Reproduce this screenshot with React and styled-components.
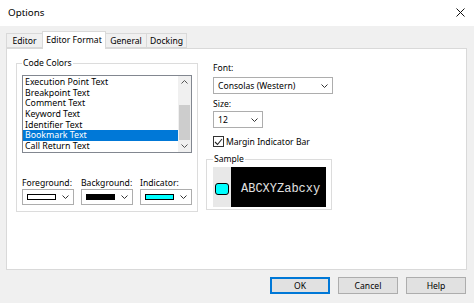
import React from 'react';
import styled, { createGlobalStyle } from 'styled-components';

const Global = createGlobalStyle`
  html, body { margin: 0; padding: 0; }
  body {
    width: 474px; height: 303px; overflow: hidden;
    background: #fff;
    font-family: "Noto Sans", "Open Sans", sans-serif;
    font-size: 8.6px; color: #000;
  }
  * { box-sizing: border-box; }
`;

const Window = styled.div`
  width: 474px; height: 303px;
  display: flex; flex-direction: column;
  background: #f0f0f0;
`;

const TitleBar = styled.div`
  height: 26px; flex-shrink: 0;
  background: #fff;
  display: flex; align-items: center; justify-content: space-between;
  padding: 0 9px 1px 8px;
`;

const Title = styled.span`
  font-size: 9.8px; color: #000;
`;

const Body = styled.div`
  padding: 5px 0 0 6px;
  display: flex; flex-direction: column;
`;

const TabStrip = styled.div`
  display: flex; align-items: flex-end;
  height: 17px;
  position: relative; z-index: 1;
`;

const Tab = styled.div`
  width: ${p => p.$w}px;
  height: ${p => (p.$active ? 18 : 15)}px;
  margin-bottom: ${p => (p.$active ? -1 : 0)}px;
  display: flex; align-items: center; justify-content: center;
  padding-bottom: ${p => (p.$active ? 2 : 0)}px;
  background: ${p => (p.$active ? '#fff' : '#f0f0f0')};
  border: 1px solid #d9d9d9;
  border-bottom: ${p => (p.$active ? 'none' : '1px solid #d9d9d9')};
  border-left-width: ${p => (p.$first || p.$active ? 1 : 0)}px;
  border-right-width: ${p => (p.$beforeActive ? 0 : 1)}px;
  white-space: nowrap;
`;

const Panel = styled.div`
  width: 461px; height: 222px;
  background: #fff;
  border: 1px solid #d9d9d9;
  display: flex; align-items: flex-start;
  padding: 8px 0 0 9px;
`;

const Group = styled.fieldset`
  margin: 0; min-width: 0;
  border: 1px solid #dcdcdc;
  width: ${p => p.$w}px;
  height: ${p => p.$h}px;
  padding: 0 5px 0 ${p => p.$pl}px;
`;

const Legend = styled.legend`
  padding: 0 1px;
  line-height: 12px;
`;

const ListBox = styled.div`
  margin-top: 6px;
  width: 170px; height: 78px;
  border: 1px solid #828790;
  display: flex;
  background: #fff;
`;

const Items = styled.div`
  flex: 1; padding: 1px 0 0 0;
  overflow: hidden;
`;

const Item = styled.div`
  height: 10.67px; line-height: 10.67px;
  padding-left: 2px;
  white-space: nowrap;
  font-size: 8.8px;
  background: ${p => (p.$sel ? '#0078d7' : 'transparent')};
  color: ${p => (p.$sel ? '#fff' : '#000')};
`;

const ScrollBar = styled.div`
  width: 13px;
  background: #f0f0f0;
  display: flex; flex-direction: column;
  align-items: center;
`;

const ScrollBtn = styled.div`
  height: 13px; width: 100%;
  display: flex; align-items: center; justify-content: center;
`;

const Track = styled.div`
  flex: 1; width: 100%;
  display: flex; flex-direction: column;
  padding: 0 1px;
`;

const Thumb = styled.div`
  margin-top: 16px;
  height: 35px;
  background: #cdcdcd;
`;

const ColorRow = styled.div`
  margin-top: 24px;
  display: flex; gap: 7px;
`;

const ColorField = styled.div`
  display: flex; flex-direction: column;
`;

const Label = styled.div`
  line-height: 12px;
  white-space: nowrap;
`;

const Combo = styled.div`
  width: ${p => p.$w}px; height: ${p => p.$h || 16}px;
  margin-top: ${p => p.$mt || 0}px;
  border: 1px solid #adadad;
  background: #fff;
  display: flex; align-items: center; justify-content: space-between;
  padding: 0 4px 0 ${p => p.$pl || 4}px;
  white-space: nowrap;
`;

const Swatch = styled.div`
  width: 29px; height: 6px;
  border: 1px solid #000;
  background: ${p => p.$c};
`;

const RightCol = styled.div`
  margin: 5px 0 0 8px;
  width: 127px;
  display: flex; flex-direction: column;
`;

const Indent = styled.div`
  margin-left: 7px;
  margin-top: ${p => p.$mt || 0}px;
  display: flex; flex-direction: column;
`;

const CheckRow = styled.label`
  margin: 7px 0 0 7px;
  height: 13px;
  display: flex; align-items: center; gap: 2px;
`;

const CheckBox = styled.span`
  width: 11px; height: 11px;
  border: 1px solid #333;
  background: #fff;
  display: flex; align-items: center; justify-content: center;
`;

const SampleGroup = styled(Group)`
  margin-top: 5px;
`;

const SampleBox = styled.div`
  margin-top: 2px;
  height: 40px; width: 113px;
  display: flex;
`;

const Margin = styled.div`
  width: 18px; background: #e8e8e8;
  display: flex; align-items: center; padding-left: 2px;
  padding-top: 3px;
`;

const Indicator = styled.div`
  width: 14px; height: 12px;
  border: 1px solid #000;
  border-radius: 3px;
  background: #00ffff;
`;

const Code = styled.div`
  flex: 1; background: #000; color: #e0e0e0;
  font-family: "Liberation Mono", "DejaVu Sans Mono", monospace;
  font-size: 12px;
  display: flex; align-items: center;
  padding: 3px 0 0 10px;
  overflow: hidden; white-space: nowrap;
`;

const Footer = styled.div`
  display: flex; justify-content: flex-end; gap: 8px;
  padding: 7px 8px 0 0;
`;

const Button = styled.div`
  width: 60px; height: 17px;
  border: 1px solid ${p => (p.$def ? '#0078d7' : '#adadad')};
  box-shadow: ${p => (p.$def ? 'inset 0 0 0 1px #0078d7' : 'none')};
  background: #e1e1e1;
  display: flex; align-items: center; justify-content: center;
`;

const Chevron = () => (
  <svg width="7" height="4" viewBox="0 0 7 4">
    <path d="M0.5 0.5 L3.5 3.5 L6.5 0.5" fill="none" stroke="#333" strokeWidth="1" />
  </svg>
);

const items = [
  'Execution Point Text',
  'Breakpoint Text',
  'Comment Text',
  'Keyword Text',
  'Identifier Text',
  'Bookmark Text',
  'Call Return Text',
];

export default function App() {
  return (
    <>
      <Global />
      <Window>
        <TitleBar>
          <Title>Options</Title>
          <svg width="9" height="9" viewBox="0 0 9 9">
            <path d="M0.5 0.5 L8.5 8.5 M8.5 0.5 L0.5 8.5" stroke="#111" strokeWidth="1" />
          </svg>
        </TitleBar>
        <Body>
          <TabStrip>
            <Tab $first $beforeActive $w={36}>Editor</Tab>
            <Tab $active $w={64}>Editor Format</Tab>
            <Tab $w={41}>General</Tab>
            <Tab $w={40}>Docking</Tab>
          </TabStrip>
          <Panel>
            <Group $w={182} $h={155} $pl={5}>
              <Legend>Code Colors</Legend>
              <ListBox>
                <Items>
                  {items.map(t => (
                    <Item key={t} $sel={t === 'Bookmark Text'}>{t}</Item>
                  ))}
                </Items>
                <ScrollBar>
                  <ScrollBtn>
                    <svg width="7" height="4" viewBox="0 0 7 4">
                      <path d="M0.5 3.5 L3.5 0.5 L6.5 3.5" fill="none" stroke="#555" strokeWidth="1" />
                    </svg>
                  </ScrollBtn>
                  <Track><Thumb /></Track>
                  <ScrollBtn>
                    <svg width="7" height="4" viewBox="0 0 7 4">
                      <path d="M0.5 0.5 L3.5 3.5 L6.5 0.5" fill="none" stroke="#555" strokeWidth="1" />
                    </svg>
                  </ScrollBtn>
                </ScrollBar>
              </ListBox>
              <ColorRow>
                <ColorField>
                  <Label>Foreground:</Label>
                  <Combo $w={52}><Swatch $c="#fff" /><Chevron /></Combo>
                </ColorField>
                <ColorField>
                  <Label>Background:</Label>
                  <Combo $w={52}><Swatch $c="#000" /><Chevron /></Combo>
                </ColorField>
                <ColorField>
                  <Label>Indicator:</Label>
                  <Combo $w={52}><Swatch $c="#00ffff" /><Chevron /></Combo>
                </ColorField>
              </ColorRow>
            </Group>
            <RightCol>
              <Indent>
                <Label>Font:</Label>
                <Combo $w={120} $h={17} $mt={3}>
                  <span>Consolas (Western)</span><Chevron />
                </Combo>
              </Indent>
              <Indent $mt={4}>
                <Label>Size:</Label>
                <Combo $w={50} $h={17} $mt={1}>
                  <span>12</span><Chevron />
                </Combo>
              </Indent>
              <CheckRow>
                <CheckBox>
                  <svg width="9" height="8" viewBox="0 0 9 8">
                    <path d="M1 4 L3.5 6.5 L8 1" fill="none" stroke="#222" strokeWidth="1.1" />
                  </svg>
                </CheckBox>
                Margin Indicator Bar
              </CheckRow>
              <SampleGroup $w={126} $h={57} $pl={6}>
                <Legend>Sample</Legend>
                <SampleBox>
                  <Margin><Indicator /></Margin>
                  <Code>ABCXYZabcxy</Code>
                </SampleBox>
              </SampleGroup>
            </RightCol>
          </Panel>
          <Footer>
            <Button $def>OK</Button>
            <Button>Cancel</Button>
            <Button>Help</Button>
          </Footer>
        </Body>
      </Window>
    </>
  );
}
